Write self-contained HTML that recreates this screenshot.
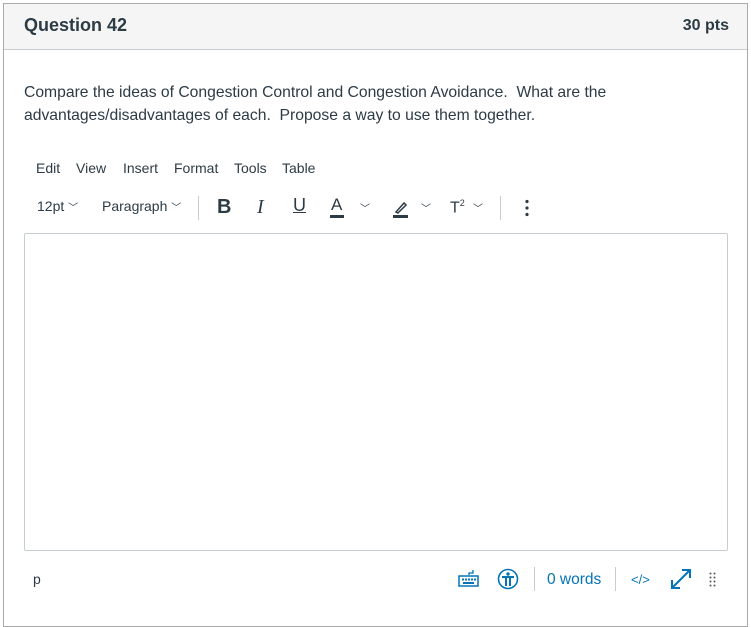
<!DOCTYPE html>
<html><head><style>
body{margin:0;width:751px;height:627px;background:#fff;font-family:"Liberation Sans",sans-serif;color:#2d3b45;position:relative;overflow:hidden}
.box{position:absolute;left:3px;top:3px;width:743px;height:622px;border:1px solid #aaa}
.hdr{position:absolute;left:0;top:0;right:0;height:45px;background:#f5f5f5;border-bottom:1px solid #c7cdd1}
.t{position:absolute;font-size:14px;white-space:nowrap}
.ico{position:absolute}
</style></head><body>
<div class="box">
<div class="hdr">
<div class="t" style="left:20px;top:11px;font-size:18px;font-weight:bold;color:#2d3b45">Question 42</div>
<div class="t" style="right:18px;top:13px;font-size:16px;font-weight:bold;color:#2d3b45">30 pts</div>
</div>
</div>
<div class="t" style="left:24px;top:81px;font-size:15.7px;line-height:23px">Compare the ideas of Congestion Control and Congestion Avoidance.&nbsp; What are the<br>advantages/disadvantages of each.&nbsp; Propose a way to use them together.</div>
<div class="t" style="left:36px;top:160px;font-size:14px">Edit</div>
<div class="t" style="left:76px;top:160px;font-size:14px">View</div>
<div class="t" style="left:123px;top:160px;font-size:14px">Insert</div>
<div class="t" style="left:174px;top:160px;font-size:14px">Format</div>
<div class="t" style="left:234px;top:160px;font-size:14px">Tools</div>
<div class="t" style="left:282px;top:160px;font-size:14px">Table</div>
<div class="t" style="left:37px;top:198px;font-size:14px">12pt <span style="font-size:10px">﹀</span></div>
<div class="t" style="left:102px;top:198px;font-size:14px">Paragraph <span style="font-size:10px">﹀</span></div>
<div style="position:absolute;left:198px;top:196px;width:1px;height:24px;background:#ccc"></div>
<div class="t" style="left:217px;top:196px;font-size:20px;font-weight:bold">B</div>
<div class="t" style="left:257px;top:196px;font-size:20px;font-style:italic;font-family:'Liberation Serif',serif">I</div>
<div class="t" style="left:293px;top:195px;font-size:18px;text-decoration:underline">U</div>
<div class="t" style="left:331px;top:195px;font-size:17px">A</div>
<div style="position:absolute;left:330px;top:215px;width:14px;height:3px;background:#2d3b45"></div>
<div class="t" style="left:360px;top:200px;font-size:10px">﹀</div>
<svg class="ico" style="left:393px;top:199px" width="16" height="20"><path d="M3 13 L11 4 L13 6 L5 14 Z" fill="none" stroke="#2d3b45" stroke-width="1.5"/><rect x="0" y="16" width="15" height="3" fill="#2d3b45"/></svg>
<div class="t" style="left:421px;top:200px;font-size:10px">﹀</div>
<div class="t" style="left:450px;top:198px;font-size:16px">T<sup style="font-size:9px">2</sup></div>
<div class="t" style="left:473px;top:200px;font-size:10px">﹀</div>
<div style="position:absolute;left:500px;top:196px;width:1px;height:24px;background:#ccc"></div>
<svg class="ico" style="left:524px;top:199px" width="6" height="18"><g fill="#2d3b45"><circle cx="3" cy="2.5" r="1.6"/><circle cx="3" cy="9" r="1.6"/><circle cx="3" cy="15.5" r="1.6"/></g></svg>
<div style="position:absolute;left:24px;top:233px;width:702px;height:316px;border:1px solid #c7cdd1;border-radius:2px"></div>
<div class="t" style="left:33px;top:571px;font-size:14px">p</div>
<svg class="ico" style="left:458px;top:569px" width="22" height="18"><path d="M15 1 v3 h-4 v2" fill="none" stroke="#0374b5" stroke-width="1.3"/><rect x="1" y="7" width="19" height="10" fill="none" stroke="#0374b5" stroke-width="1.5"/><g fill="#0374b5"><rect x="4" y="9.5" width="2" height="2"/><rect x="7" y="9.5" width="2" height="2"/><rect x="10" y="9.5" width="2" height="2"/><rect x="13" y="9.5" width="2" height="2"/><rect x="16" y="9.5" width="2" height="2"/><rect x="5" y="13" width="11" height="2"/></g></svg>
<svg class="ico" style="left:497px;top:568px" width="22" height="22"><circle cx="11" cy="11" r="9.5" fill="none" stroke="#0374b5" stroke-width="1.6"/><circle cx="11" cy="6" r="1.7" fill="#0374b5"/><path d="M5 9 h12 M9 9 v9 M13 9 v9" stroke="#0374b5" stroke-width="2"/></svg>
<div style="position:absolute;left:534px;top:567px;width:1px;height:24px;background:#ccc"></div>
<div class="t" style="left:547px;top:571px;font-size:15.5px;color:#0374b5">0 words</div>
<div style="position:absolute;left:615px;top:567px;width:1px;height:24px;background:#ccc"></div>
<div class="t" style="left:631px;top:572px;font-size:13px;color:#0374b5">&lt;/&gt;</div>
<svg class="ico" style="left:670px;top:568px" width="22" height="22"><path d="M2 20 L20 2 M12 2 H20 V10 M2 12 V20 H10" fill="none" stroke="#0374b5" stroke-width="2"/></svg>
<svg class="ico" style="left:709px;top:572px" width="8" height="16"><g fill="#555"><circle cx="1.5" cy="1.5" r="1"/><circle cx="5.5" cy="1.5" r="1"/><circle cx="1.5" cy="5.5" r="1"/><circle cx="5.5" cy="5.5" r="1"/><circle cx="1.5" cy="9.5" r="1"/><circle cx="5.5" cy="9.5" r="1"/><circle cx="1.5" cy="13.5" r="1"/><circle cx="5.5" cy="13.5" r="1"/></g></svg>
</body></html>
